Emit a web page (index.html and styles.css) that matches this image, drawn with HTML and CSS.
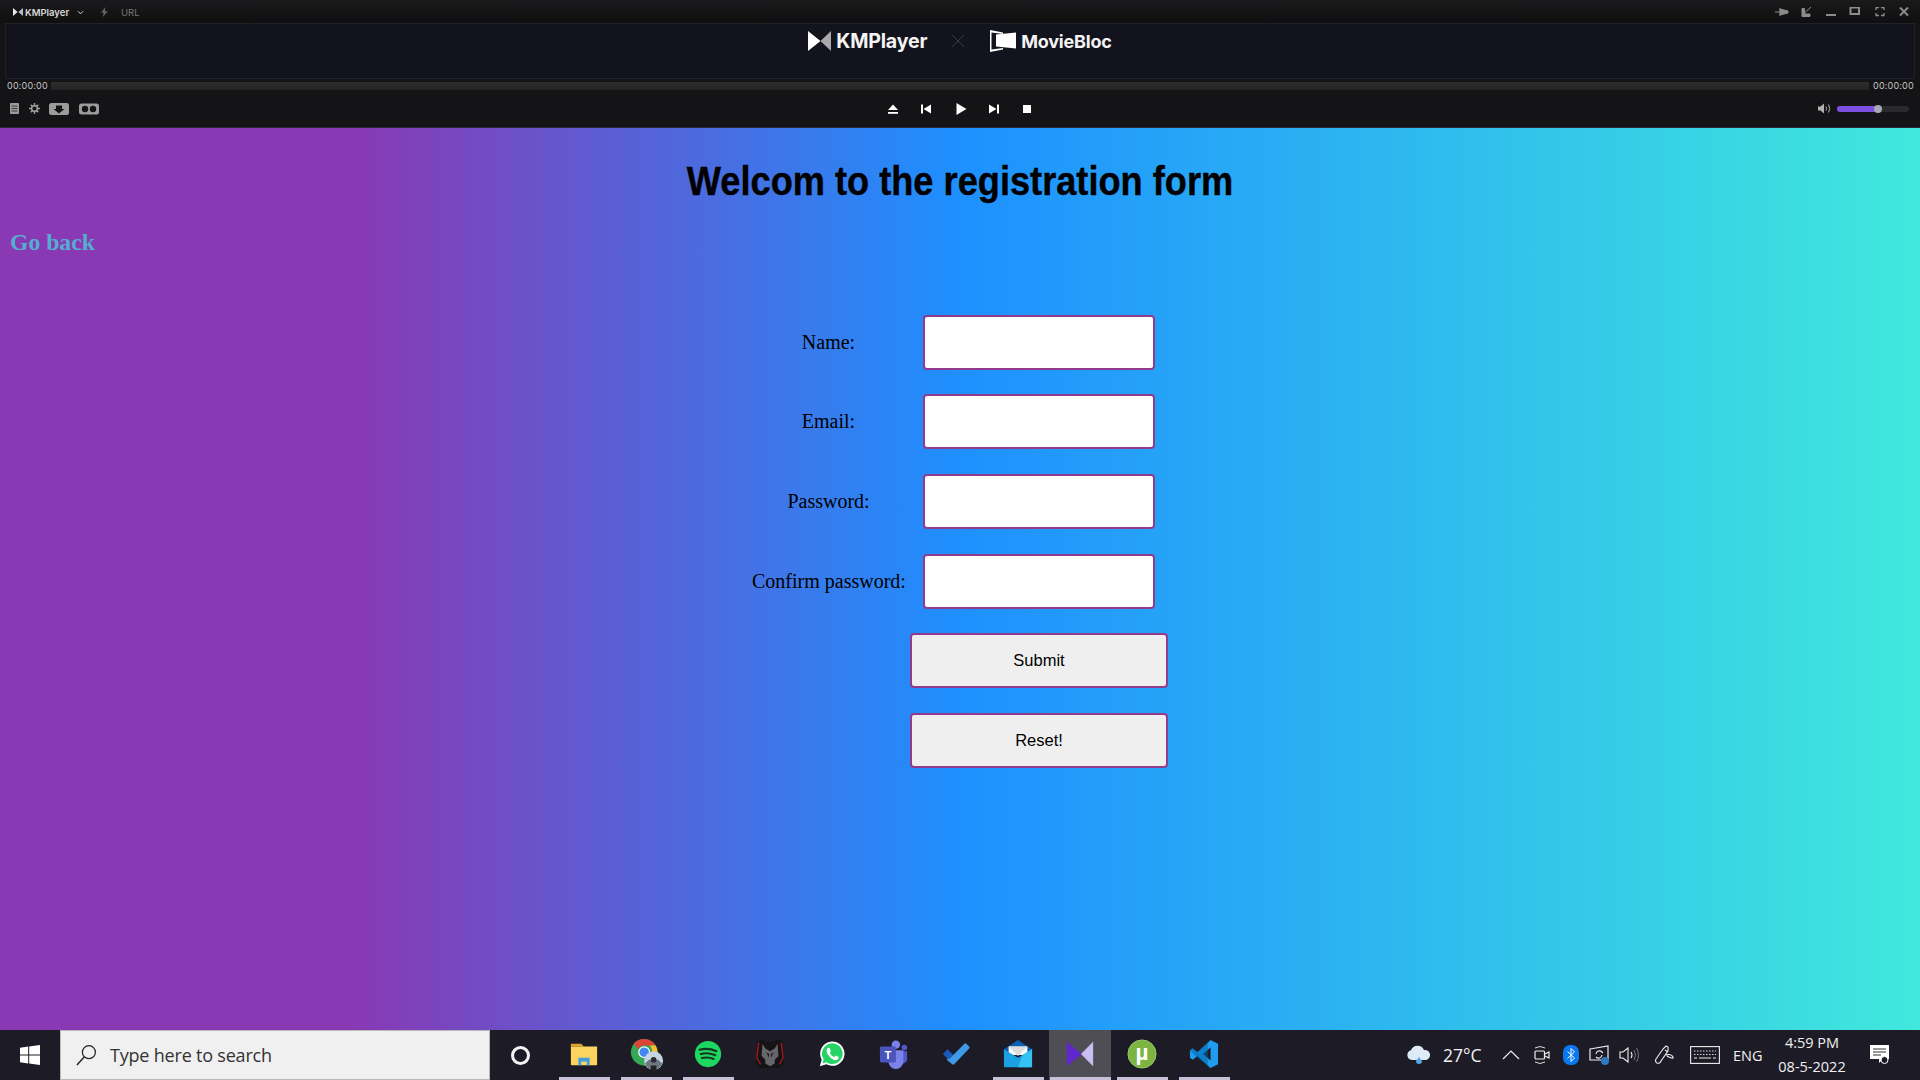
FILE: index.html
```html
<!DOCTYPE html>
<html lang="en">
<head>
<meta charset="utf-8">
<title>Registration</title>
<link rel="stylesheet" href="styles.css">
</head>
<body>
<header class="player">
  <div class="titlebar">
    <div class="brand">
      <svg class="mini-mark" viewBox="0 0 10 8"><path d="M0 0l4.600 4L0 8z" fill="#e8e8e8"/><path d="M10 0L5.400 4 10 8z" fill="#bdbdbd"/></svg>
      <span class="brand-name">KMPlayer</span>
      <svg class="chev" viewBox="0 0 8 5"><path d="M1 1l3 3 3-3" fill="none" stroke="#ddd" stroke-width="1.100"/></svg>
      <svg class="bolt" viewBox="0 0 10 12"><path d="M6 0L1 7h3l-1 5 6-7H5.500z" fill="#666"/></svg>
      <span class="url">URL</span>
    </div>
    <div class="winctl">
      <svg class="wi" viewBox="0 0 14 10"><path d="M0 5h4M5 1v8M5 2l8 2v2l-8 2z" fill="#8c8c8c" stroke="#8c8c8c"/></svg>
      <svg class="wi" viewBox="0 0 14 10"><path d="M12 0L6 5.500M3 1.500v8h8V7H5.500V1.500z" fill="#8c8c8c" stroke="#8c8c8c" stroke-width="1"/></svg>
      <svg class="wi" viewBox="0 0 14 10"><path d="M2 8h10" stroke="#8c8c8c" stroke-width="2"/></svg>
      <svg class="wi" viewBox="0 0 14 10"><rect x="2.500" y="0.500" width="8.500" height="6.500" fill="none" stroke="#8c8c8c" stroke-width="2"/></svg>
      <svg class="wi" viewBox="0 0 14 10"><path d="M3 3V0.500h3M8 0.500h3V3M11 6v2.500H8M6 8.500H3V6" fill="none" stroke="#8c8c8c" stroke-width="1.300"/></svg>
      <svg class="wi" viewBox="0 0 14 10"><path d="M3 0.500l8 8M11 0.500l-8 8" stroke="#8c8c8c" stroke-width="2"/></svg>
    </div>
  </div>
  <div class="video">
    <div class="logo">
      <svg class="km-mark" viewBox="0 0 23 20"><path d="M0 0l12.500 10L0 20z" fill="#fff"/><path d="M23 0L12.500 10 23 20z" fill="#a9a9ad"/></svg>
      <span class="logo-text km-text">KMPlayer</span>
    </div>
    <svg class="logo-x" viewBox="0 0 12 12"><path d="M0 0l12 12M12 0L0 12" stroke="#3a3b42" stroke-width="1"/></svg>
    <div class="logo">
      <svg class="mb-mark" viewBox="0 0 27 22"><path d="M1 0l13 2.500V4L2.500 2.500v17L14 18v1.500L1 22z" fill="#fff"/><path d="M7 4.500l20-2v16l-20-2z" fill="#fff"/></svg>
      <span class="logo-text mb-text">MovieBloc</span>
    </div>
  </div>
  <div class="seek">
    <span class="time">00:00:00</span>
    <div class="track"></div>
    <span class="time">00:00:00</span>
  </div>
  <div class="controls">
    <div class="ctl-left">
      <svg class="c-list" viewBox="0 0 9 11"><rect width="9" height="11" rx="1" fill="#9c9c9c"/><path d="M1.500 3h6M1.500 5.500h6M1.500 8h6" stroke="#222" stroke-width="0.800"/></svg>
      <svg class="c-gear" viewBox="0 0 12 12"><circle cx="6" cy="6" r="3.200" fill="none" stroke="#9c9c9c" stroke-width="1.800"/><path d="M6 0v2.500M6 9.500V12M0 6h2.500M9.500 6H12M1.800 1.800l1.800 1.800M8.400 8.400l1.800 1.800M10.200 1.800L8.400 3.600M3.600 8.400l-1.800 1.800" stroke="#9c9c9c" stroke-width="1.500"/></svg>
      <svg class="c-pill" viewBox="0 0 20 12"><rect width="20" height="12" rx="2.500" fill="#9c9c9c"/><path d="M7 2.500h6V6h2.500L10 10.500 4.500 6H7z" fill="#141416"/></svg>
      <svg class="c-vr" viewBox="0 0 20 12"><rect width="20" height="11" y="0.500" rx="2.500" fill="#9c9c9c"/><circle cx="6" cy="6" r="3.200" fill="#141416"/><circle cx="14" cy="6" r="3.200" fill="#141416"/></svg>
    </div>
    <div class="ctl-mid">
      <svg class="m-btn" viewBox="0 0 12 12"><path d="M6 1.500L11 7H1z" fill="#fff"/><path d="M1 9h10v1.800H1z" fill="#fff"/></svg>
      <svg class="m-btn" viewBox="0 0 12 12"><path d="M1 1.500h2v9H1zM11 1.500v9L3.500 6z" fill="#fff"/></svg>
      <svg class="m-play" viewBox="0 0 12 12"><path d="M1.500 0l10 6-10 6z" fill="#fff"/></svg>
      <svg class="m-btn" viewBox="0 0 12 12"><path d="M9 1.500h2v9H9zM1 1.500v9L8.500 6z" fill="#fff"/></svg>
      <svg class="m-btn" viewBox="0 0 12 12"><rect x="2" y="2" width="8" height="8" fill="#fff"/></svg>
    </div>
    <div class="ctl-right">
      <svg class="vol-ic" viewBox="0 0 13 11"><path d="M0 3.500h2.500L6 0.500v10l-3.500-3H0z" fill="#b0b0b0"/><path d="M8 3.500q1.200 2 0 4M10.500 1.500q2.500 4 0 8" fill="none" stroke="#b0b0b0" stroke-width="1"/></svg>
      <div class="vol"><div class="vol-fill"></div><div class="vol-knob"></div></div>
    </div>
  </div>
</header>

<main class="page">
  <h1 class="title">Welcom to the registration form</h1>
  <a class="back" href="#">Go back</a>
  <form class="form">
    <label class="lbl">Name:</label><div class="cell"><input class="field" type="text"></div>
    <label class="lbl">Email:</label><div class="cell"><input class="field" type="text"></div>
    <label class="lbl">Password:</label><div class="cell"><input class="field" type="password"></div>
    <label class="lbl">Confirm password:</label><div class="cell"><input class="field" type="password"></div>
    <span></span><div class="cell"><button class="btn" type="button">Submit</button></div>
    <span></span><div class="cell"><button class="btn" type="button">Reset!</button></div>
  </form>
</main>

<footer class="taskbar">
  <div class="start">
    <svg class="win" viewBox="0 0 20 20"><path d="M0 2.800l8.200-1.200v7.900H0zM9.200 1.400L20 0v9.500H9.200zM0 10.500h8.200v7.900L0 17.200zM9.200 10.500H20V20L9.200 18.600z" fill="#fff"/></svg>
  </div>
  <div class="search">
    <svg class="mag" viewBox="0 0 22 24"><circle cx="13.500" cy="8.500" r="6.800" fill="none" stroke="#222" stroke-width="1.300"/><path d="M8.500 13.500L1 22" stroke="#222" stroke-width="1.500"/></svg>
    <span class="search-text">Type here to search</span>
  </div>
  <div class="cortana"><span class="ring"></span></div>
  <div class="apps">
    <div class="app on">
      <svg class="ai" viewBox="0 0 32 32"><path d="M2 5h11l3 3H2z" fill="#e0a526"/><path d="M2 8h28v19a1 1 0 0 1-1 1H3a1 1 0 0 1-1-1z" fill="#fbd35f"/><path d="M10 20h12v8h-3v-4h-6v4h-3z" fill="#3f9fe0"/></svg>
    </div>
    <div class="app on">
      <svg class="ai over" viewBox="0 0 36 36"><circle cx="15" cy="15" r="14" fill="#34a853"/><path d="M15 1a14 14 0 0 1 12.200 7H15a7 7 0 0 0-6.500 4.200L4 5.800A14 14 0 0 1 15 1z" fill="#db4437"/><path d="M27.200 8A14 14 0 0 1 15 29l6-10.500A7 7 0 0 0 21 8z" fill="#fbc02d"/><circle cx="15" cy="15" r="6.300" fill="#fff"/><circle cx="15" cy="15" r="5" fill="#4285f4"/><circle cx="25" cy="24" r="10" fill="#c5d5e4"/><path d="M16 27a9.500 9.500 0 0 0 18 0l-4-4h-10z" fill="#6d7780"/><circle cx="25" cy="23" r="3" fill="#2c2c30"/><path d="M22 34a9 9 0 0 0 6 0v-5h-6z" fill="#222"/></svg>
    </div>
    <div class="app on">
      <svg class="ai" viewBox="0 0 32 32"><circle cx="16" cy="16" r="14" fill="#1ed760"/><path d="M7 11.500q9-2.500 18 1.500M8.300 16q8-2 15.500 1.300M9.500 20.300q6.500-1.500 12.500 1" fill="none" stroke="#14351f" stroke-width="2.200" stroke-linecap="round"/></svg>
    </div>
    <div class="app">
      <svg class="ai" viewBox="0 0 32 32"><path d="M3 2l6-2 2 3h10l2-3 6 2 2 24-5 5H6l-5-5z" fill="#141416"/><path d="M4 4L2 20l4 7M28 4l2 16-4 7" stroke="#b0141c" stroke-width="1.400" fill="none"/><path d="M8 5l3 5 5 3 5-3 3-5 1 13-4 4v4l-5 3-5-3v-4l-4-4z" fill="#67676b"/><path d="M12 14l3 2v4zM20 14l-3 2v4z" fill="#1b1b1e"/></svg>
    </div>
    <div class="app">
      <svg class="ai" viewBox="0 0 32 32"><path d="M3 29l2-7a13 13 0 1 1 5 5z" fill="#fff"/><path d="M5.800 26l1.300-4.300a11 11 0 1 1 3.100 3.100z" fill="#25d366"/><path d="M11.500 9.500c-1.500 1.500-2 4 1 8s6 5.500 8 5 3-2.500 2.500-3.300l-3-1.500-1.400 1.600c-2-.6-4-2.500-5-4.700l1.200-1.500-1.300-3.300c-.7-.5-1.500-.6-2-.3z" fill="#fff"/></svg>
    </div>
    <div class="app">
      <svg class="ai" viewBox="0 0 32 32"><circle cx="18" cy="6" r="4.500" fill="#7b83eb"/><circle cx="27" cy="9" r="3" fill="#5059c9"/><path d="M22 13h8v9a5 5 0 0 1-8 3z" fill="#5059c9"/><path d="M10 12h16v12a8 8 0 0 1-16 0z" fill="#7b83eb"/><rect x="1" y="8" width="17" height="17" rx="1.500" fill="#4b53bc"/><text class="teams-t" x="9.500" y="21">T</text></svg>
    </div>
    <div class="app">
      <svg class="ai" viewBox="0 0 32 32"><path d="M2 16l5-5 6 6-5 5z" fill="#185abd"/><path d="M8 22l17-17a1.500 1.500 0 0 1 2 0l3 3a1.500 1.500 0 0 1 0 2L14 27a1.500 1.500 0 0 1-2 0l-6-5 2-2z" fill="#3f9be8"/></svg>
    </div>
    <div class="app on">
      <svg class="ai" viewBox="0 0 32 32"><path d="M1 11L16 1l15 10v6H1z" fill="#0a5fb0"/><path d="M6 8h20v9H6z" fill="#fff"/><path d="M6 8h20L16 18z" fill="#dcdcdc"/><path d="M1 11l15 9 15-9v18a1 1 0 0 1-1 1H2a1 1 0 0 1-1-1z" fill="#1ba1e2"/><path d="M31 11v18a1 1 0 0 1-1 1H16l5-13z" fill="#35c1f1"/></svg>
    </div>
    <div class="app active on">
      <svg class="ai" viewBox="0 0 32 32"><path d="M2 3l16 13L2 29z" fill="#5f27cd"/><path d="M30 3v26L17 16z" fill="#c9bdf2"/></svg>
    </div>
    <div class="app on">
      <svg class="ai" viewBox="0 0 32 32"><circle cx="16" cy="16" r="15" fill="#7cb342"/><circle cx="16" cy="16" r="15" fill="none" stroke="#9ccc65" stroke-width="1"/><text class="mu" x="16" y="22">µ</text></svg>
    </div>
    <div class="app on">
      <svg class="ai" viewBox="0 0 32 32"><path d="M23 1l8 4v22l-8 4L9 18l-5 4-3-2v-8l3-2 5 4zM23 9l-8 7 8 7z" fill="#1f9cf0"/><path d="M23 1L9 14 4 10 1 12v0l8 8L23 31l-3-1V5z" fill="#0065a9" opacity="0.550"/></svg>
    </div>
  </div>
  <div class="tray">
    <svg class="t-cloud" viewBox="0 0 26 20"><path d="M6 15a5 5 0 0 1-1-9.800A7 7 0 0 1 18 5a5 5 0 0 1 2 10z" fill="#dcebf7"/><path d="M13 12l3 4a3 3 0 1 1-6 0z" fill="#5aa6e0"/></svg>
    <span class="temp">27°C</span>
    <svg class="t-chev" viewBox="0 0 18 10"><path d="M1 9l8-8 8 8" fill="none" stroke="#eee" stroke-width="1.200"/></svg>
    <svg class="t-cam" viewBox="0 0 16 20"><path d="M1 3q5-3 10 0M1 17q5 3 10 0" fill="none" stroke="#ddd" stroke-width="1"/><rect x="1" y="6" width="9.500" height="8" rx="1" fill="none" stroke="#eee" stroke-width="1.200"/><path d="M11 9l4-2v6l-4-2" fill="none" stroke="#eee" stroke-width="1.200"/></svg>
    <svg class="t-bt" viewBox="0 0 16 20"><rect width="16" height="20" rx="7" fill="#0a78f0"/><path d="M4.500 6.500l7 6.500L8 16.500v-13l3.500 3.500-7 6.500" fill="none" stroke="#fff" stroke-width="1"/></svg>
    <svg class="t-sync" viewBox="0 0 21 20"><path d="M1 4l18-3v14H1z" fill="none" stroke="#eee" stroke-width="1.200"/><path d="M7 9a3.500 3.500 0 0 1 6-2l1 1M13 10a3.500 3.500 0 0 1-6 2" fill="none" stroke="#eee" stroke-width="1.100"/><circle cx="16" cy="16" r="4" fill="#2f78c4"/></svg>
    <svg class="t-vol" viewBox="0 0 20 16"><path d="M1 5h3l5-4v14l-5-4H1z" fill="none" stroke="#eee" stroke-width="1.100"/><path d="M12 5q2 3 0 6" fill="none" stroke="#eee" stroke-width="1.100"/><path d="M15 3q3 5 0 10M17.500 1q4 7 0 14" fill="none" stroke="#777" stroke-width="1"/></svg>
    <svg class="t-pen" viewBox="0 0 20 20"><path d="M3 18a3 3 0 0 1-1-4l7-10 3-3 2 1 0 4-7 10a3 3 0 0 1-4 2zM11 5l3 2M12 10c3-1 6 0 7 2s-3 1-6-1" fill="none" stroke="#eee" stroke-width="1.100"/></svg>
    <svg class="t-kbd" viewBox="0 0 30 18"><rect x="0.600" y="0.600" width="28.800" height="16.800" fill="none" stroke="#eee" stroke-width="1.100"/><path d="M4 5h22M4 8.500h22" stroke="#ddd" stroke-width="1" stroke-dasharray="1.500 1.500"/><path d="M4 12h3M9 12h12M23 12h3" stroke="#eee" stroke-width="1.200"/></svg>
    <span class="lang">ENG</span>
    <div class="clock"><span>4:59 PM</span><span>08-5-2022</span></div>
    <svg class="t-note" viewBox="0 0 21 20"><path d="M1 0h19v14h-6l-4 4v-4H1z" fill="#fff"/><path d="M4 4h13M4 7h13M4 10h8" stroke="#333" stroke-width="1"/><circle cx="15.500" cy="15" r="3.500" fill="#1d1c26" stroke="#fff" stroke-width="1"/></svg>
  </div>
</footer>
</body>
</html>
```

FILE: styles.css
```css
* { box-sizing: border-box; }
html, body { margin: 0; height: 100%; }
body {
  display: flex;
  flex-direction: column;
  height: 100vh;
  overflow: hidden;
  font-family: "Liberation Serif", serif;
}

/* player */
.player {
  height: 128px;
  flex: none;
  background: #141416;
  display: flex;
  flex-direction: column;
  color: #ddd;
  font-family: "Inter", "Liberation Sans", sans-serif;
  border-bottom: 1px solid #2a2836;
}
.titlebar {
  height: 23px;
  flex: none;
  display: flex;
  align-items: center;
  justify-content: space-between;
  padding: 1px 9px 0 13px;
  background: linear-gradient(#1a1a1c, #0f0f10);
}
.brand { display: flex; align-items: center; }
.mini-mark { width: 10px; height: 8px; margin-right: 2px; }
.brand-name { font-size: 9.500px; font-weight: 600; color: #d8d8d8; width: 48px; }
.chev { width: 7px; height: 5px; margin-left: 4px; }
.bolt { width: 9px; height: 10px; margin-left: 16px; }
.url { font-size: 9.500px; color: #777; margin-left: 12px; }
.winctl { display: flex; gap: 10.500px; }
.wi { width: 14px; height: 10px; }
.video {
  height: 56px;
  flex: none;
  margin: 0 5px;
  padding-bottom: 20px;
  background: #12131c;
  border: 1px solid #20212a;
  display: flex;
  align-items: center;
  justify-content: center;
  gap: 25px;
}
.logo { display: flex; align-items: center; gap: 5px; }
.km-mark { width: 23px; height: 20px; }
.mb-mark { width: 27px; height: 22px; }
.logo-text { font-weight: 700; color: #f4f4f4; letter-spacing: -0.200px; }
.km-text { font-size: 19.600px; }
.mb-text { font-size: 18px; }
.logo-x { width: 12px; height: 12px; }
.seek {
  height: 9px;
  margin-top: 2px;
  flex: none;
  display: flex;
  align-items: center;
  padding: 0 7px;
  gap: 4px;
}
.time { font-size: 9px; color: #c4c4c4; width: 40px; letter-spacing: 0.200px; white-space: nowrap; }
.track { flex: 1; height: 8px; background: linear-gradient(#2e2e2f, #232324); }
.controls {
  flex: 1;
  display: grid;
  grid-template-columns: 1fr auto 1fr;
  align-items: center;
  padding: 0 11px 0 10px;
}
.ctl-left { display: flex; align-items: center; gap: 9.500px; }
.c-list { width: 9px; height: 11px; }
.c-gear { width: 11px; height: 11px; }
.c-pill { width: 20px; height: 12px; }
.c-vr { width: 20px; height: 12px; }
.ctl-mid { display: flex; align-items: center; gap: 21px; }
.m-btn { width: 12px; height: 12px; }
.m-play { width: 12px; height: 12px; margin-left: 2px; }
.ctl-right { display: flex; align-items: center; justify-content: flex-end; gap: 6px; }
.vol-ic { width: 13px; height: 11px; }
.vol { width: 72px; height: 6px; background: #2a2a2c; border-radius: 3px; position: relative; }
.vol-fill { width: 41px; height: 100%; background: #7b4fe0; border-radius: 3px; }
.vol-knob {
  position: absolute; left: 37px; top: -1px;
  width: 8px; height: 8px; border-radius: 50%;
  background: #a9a9b4;
}

/* page */
.page {
  flex: 1;
  min-height: 0;
  background: linear-gradient(to right, #8939b4 18.500%, #1e90ff 50%, #40e8dc 100%);
  padding-top: 1px;
}
.title {
  margin: 28.500px 0 0;
  text-align: center;
  font-family: "Liberation Sans", sans-serif;
  font-size: 40px;
  line-height: 46px;
  font-weight: 700;
  color: #000;
  -webkit-text-stroke: 0.400px #000;
  transform: scaleX(0.905);
}
.back {
  display: block;
  width: max-content;
  margin: 24.500px 0 0 10px;
  font-size: 23.700px;
  line-height: 28px;
  font-weight: 700;
  color: #54aed0;
  text-decoration: none;
}
.form {
  display: grid;
  grid-template-columns: 153px 258px;
  grid-auto-rows: 55px;
  column-gap: 5px;
  row-gap: 24.600px;
  justify-content: center;
  align-items: center;
  margin-top: 58.900px;
}
.lbl { font-size: 20px; text-align: center; color: #000; white-space: nowrap; }
.cell { display: flex; justify-content: center; align-items: center; height: 55px; }
.field {
  width: 232px;
  height: 55px;
  background: #fff;
  border: 2px solid #923a8c;
  border-radius: 4px;
}
.btn {
  width: 258px;
  height: 55px;
  background: #efefef;
  border: 2px solid #923a8c;
  border-radius: 4px;
  font-family: "Liberation Sans", sans-serif;
  font-size: 16.500px;
  color: #000;
}

/* taskbar */
.taskbar {
  height: 50px;
  flex: none;
  background: #1d1c26;
  display: flex;
  align-items: stretch;
  color: #f0f0f0;
  font-family: "Open Sans", "Noto Sans", sans-serif;
}
.start { width: 60px; display: flex; align-items: center; justify-content: center; }
.win { width: 20px; height: 20px; }
.search {
  width: 430px;
  background: #f0f0f0;
  border: 1px solid #b8b8b8;
  display: flex;
  align-items: center;
  padding-left: 15px;
}
.mag { width: 21px; height: 23px; }
.search-text { font-size: 18px; color: #333; margin-left: 13px; letter-spacing: -0.200px; }
.cortana { width: 63px; display: flex; align-items: center; justify-content: center; padding-right: 3px; }
.ring { width: 19px; height: 19px; border: 3px solid #f4f4f4; border-radius: 50%; }
.apps { display: flex; }
.app {
  width: 62px;
  display: flex;
  align-items: center;
  justify-content: center;
  position: relative;
  padding-bottom: 2px;
}
.app.on::after {
  content: "";
  position: absolute;
  left: 6px; right: 5px; bottom: 0;
  height: 3px;
  background: #c8c0d8;
}
.app.active { background: #4f4e55; }
.app.active::after { left: 1px; right: 0; }
.ai { width: 30px; height: 30px; }
.ai.over { width: 34px; height: 34px; margin-left: 1px; margin-top: 2px; }
.teams-t { font-family: "Liberation Sans", sans-serif; font-size: 12px; font-weight: 700; fill: #fff; text-anchor: middle; }
.mu { font-family: "Liberation Sans", sans-serif; font-size: 24px; font-weight: 700; fill: #fff; text-anchor: middle; }
.tray { margin-left: auto; display: flex; align-items: center; padding-right: 30px; }
.t-cloud { width: 26px; height: 20px; }
.temp { font-size: 17.500px; margin-left: 11px; width: 38px; white-space: nowrap; }
.t-chev { width: 18px; height: 10px; margin-left: 21px; }
.t-cam { width: 16px; height: 20px; margin-left: 14px; }
.t-bt { width: 16px; height: 20px; margin-left: 13px; }
.t-sync { width: 21px; height: 20px; margin-left: 10px; }
.t-vol { width: 20px; height: 16px; margin-left: 9px; }
.t-pen { width: 20px; height: 20px; margin-left: 15px; }
.t-kbd { width: 30px; height: 18px; margin-left: 16px; }
.lang { font-size: 14.500px; margin-left: 13px; width: 30px; }
.clock {
  display: flex;
  flex-direction: column;
  align-items: center;
  font-size: 14.500px;
  line-height: 24px;
  margin-left: 14px;
  width: 70px;
  white-space: nowrap;
  margin-top: -1px;
}
.t-note { width: 21px; height: 20px; margin-left: 22px; }
```
